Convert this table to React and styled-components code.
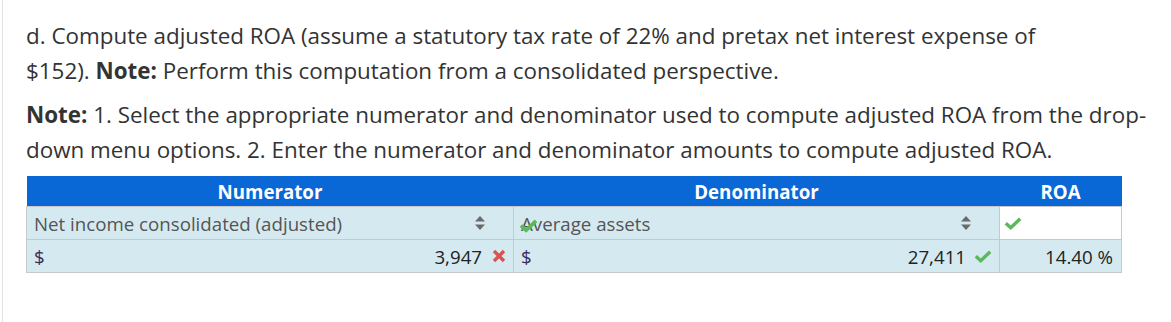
import React from "react";
import styled, { createGlobalStyle } from "styled-components";

const GlobalStyle = createGlobalStyle`
  html, body { margin: 0; padding: 0; background: #fff; }
  body { font-family: "Open Sans", "Liberation Sans", sans-serif; color: #333; }
`;

const Page = styled.div`
  width: 1171px;
  height: 322px;
  box-sizing: border-box;
  border-left: 1px solid #e3e3e3;
  margin-left: 2px;
  padding: 18px 0 0 23px;
`;

const Para = styled.p`
  margin: 0 0 9px;
  font-size: 22.4px;
  line-height: 35px;
  width: 1130px;
  color: #333;
  b { font-weight: 700; }
`;

const Table = styled.table`
  border-collapse: collapse;
  margin-top: 9px;
  width: 1095px;
  table-layout: fixed;
  font-size: 18.7px;
`;

const Head = styled.th`
  background: #0a68d6;
  color: #fff;
  font-weight: 700;
  height: 30px;
  padding: 0;
  text-align: center;
  width: ${(p) => p.w}px;
`;

const Cell = styled.td`
  background: ${(p) => (p.white ? "#fff" : "#d5eaf0")};
  border: 1px solid #c9c9c9;
  height: 32px;
  padding: 0 ${(p) => (p.white ? 4 : 7)}px;
  color: #555;
  position: relative;
`;

const Inner = styled.div`
  display: flex;
  align-items: center;
  gap: 6px;
`;

const Label = styled.span`
  flex: 1;
  white-space: nowrap;
`;

const Dollar = styled.span`
  color: #3a2a5a;
  flex: 1;
`;

const Num = styled.span`
  color: #222;
  text-align: right;
  margin-right: ${(p) => p.gap}px;
`;

const Pct = styled.div`
  color: #222;
  text-align: right;
  margin-right: 1px;
`;

const Overlap = styled.span`
  position: absolute;
  left: 5px;
  top: 6px;
`;

const Chevrons = () => (
  <svg width="12" height="16" viewBox="0 0 12 16">
    <path d="M6 1 L11 6.5 H1 Z" fill="#6b6b6b" />
    <path d="M6 15 L11 9.5 H1 Z" fill="#6b6b6b" />
  </svg>
);

const Check = ({ size = 18 }) => (
  <svg width={size} height={size * 0.8} viewBox="0 0 20 16">
    <path d="M2 8 L7.5 13 L18 3" fill="none" stroke="#5cb85c" strokeWidth="3.8" />
  </svg>
);

const Cross = () => (
  <svg width="14" height="14" viewBox="0 0 14 14">
    <path d="M2 2 L12 12 M12 2 L2 12" stroke="#d9534f" strokeWidth="3.4" />
  </svg>
);

export default function App() {
  return (
    <>
      <GlobalStyle />
      <Page>
        <Para>
          d. Compute adjusted ROA (assume a statutory tax rate of 22% and pretax net interest expense of
          <br />
          $152). <b>Note:</b> Perform this computation from a consolidated perspective.
        </Para>
        <Para>
          <b>Note:</b> 1. Select the appropriate numerator and denominator used to compute adjusted ROA from the drop-down
          menu options. 2. Enter the numerator and denominator amounts to compute adjusted ROA.
        </Para>
        <Table>
          <thead>
            <tr>
              <Head w={487}>Numerator</Head>
              <Head w={486}>Denominator</Head>
              <Head w={122}>ROA</Head>
            </tr>
          </thead>
          <tbody>
            <tr>
              <Cell>
                <Inner>
                  <Label>Net income consolidated (adjusted)</Label>
                  <Chevrons />
                  <span style={{ width: 14 }} />
                </Inner>
              </Cell>
              <Cell>
                <Overlap>
                  <Check size={19} />
                </Overlap>
                <Inner>
                  <Label>Average assets</Label>
                  <Chevrons />
                  <span style={{ width: 14 }} />
                </Inner>
              </Cell>
              <Cell white>
                <Inner>
                  <Check />
                </Inner>
              </Cell>
            </tr>
            <tr>
              <Cell>
                <Inner>
                  <Dollar>$</Dollar>
                  <Num gap={4}>3,947</Num>
                  <Cross />
                </Inner>
              </Cell>
              <Cell>
                <Inner>
                  <Dollar>$</Dollar>
                  <Num gap={2}>27,411</Num>
                  <Check />
                </Inner>
              </Cell>
              <Cell>
                <Pct>14.40 %</Pct>
              </Cell>
            </tr>
          </tbody>
        </Table>
      </Page>
    </>
  );
}
